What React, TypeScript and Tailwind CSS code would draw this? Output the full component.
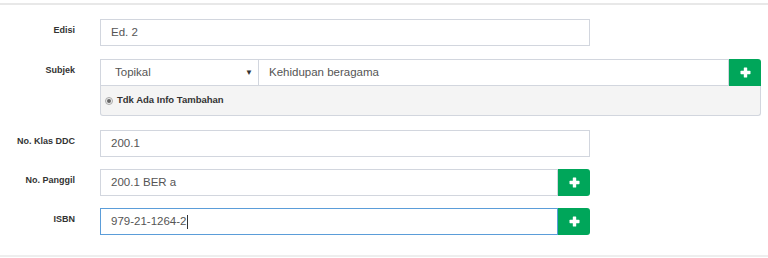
import React from "react";

const font = { fontFamily: '"Liberation Sans", Arial, sans-serif' };

function Plus() {
  return (
    <svg width="11" height="11" viewBox="0 0 11 11">
      <rect x="3.8" y="0.5" width="3.4" height="10" rx="0.6" fill="#fff" />
      <rect x="0.5" y="3.8" width="10" height="3.4" rx="0.6" fill="#fff" />
    </svg>
  );
}

function Label({ children }: { children: React.ReactNode }) {
  return (
    <div className="w-[76px] shrink-0 pt-[6px] pr-[1px] text-right text-[9px] font-bold leading-[11px] text-[#333]">
      {children}
    </div>
  );
}

function GreenBtn({ rounded = "rounded-r-[3px]" }: { rounded?: string }) {
  return (
    <div className={`flex h-[27px] w-[32px] shrink-0 items-center justify-center bg-[#00a65a] ${rounded}`}>
      <Plus />
    </div>
  );
}

export default function App() {
  return (
    <div className="h-[258px] w-[768px] overflow-hidden bg-white" style={font}>
      <div className="h-[3px]" />
      <div className="h-[2px] bg-[#e8e8e8]" />
      <div className="flex flex-col pt-[14px]">
        {/* Edisi */}
        <div className="flex gap-[24px]">
          <Label>Edisi</Label>
          <div className="flex h-[27px] w-[490px] items-center border border-[#d2d6de] px-[10px] text-[11.5px] text-[#555]">
            Ed. 2
          </div>
        </div>
        {/* Subjek */}
        <div className="mt-[13px] flex gap-[24px]">
          <Label>Subjek</Label>
          <div className="flex w-[661px] flex-col">
            <div className="flex h-[27px]">
              <div className="flex w-[159px] items-center justify-between border border-[#d2d6de] pl-[14px] pr-[5px] text-[11.5px] text-[#555]">
                <span>Topikal</span>
                <span className="text-[8px] text-[#333]">▼</span>
              </div>
              <div className="flex flex-1 items-center border border-l-0 border-[#d2d6de] px-[10px] text-[11.5px] text-[#555]">
                Kehidupan beragama
              </div>
              <GreenBtn rounded="rounded-tr-[3px]" />
            </div>
            <div className="flex h-[30px] items-center gap-[4px] rounded-b-[3px] border border-t-0 border-[#d2d6de] bg-[#f4f4f4] pl-[4px] text-[9.5px] font-bold text-[#333]">
              <span className="flex h-[8px] w-[8px] items-center justify-center rounded-full border border-[#aaa] bg-[#eee]">
                <span className="h-[4px] w-[4px] rounded-full bg-[#666]" />
              </span>
              <span>Tdk Ada Info Tambahan</span>
            </div>
          </div>
        </div>
        {/* No. Klas DDC */}
        <div className="mt-[14px] flex gap-[24px]">
          <Label>No. Klas DDC</Label>
          <div className="flex h-[27px] w-[490px] items-center border border-[#d2d6de] px-[10px] text-[11.5px] text-[#555]">
            200.1
          </div>
        </div>
        {/* No. Panggil */}
        <div className="mt-[12px] flex gap-[24px]">
          <Label>No. Panggil</Label>
          <div className="flex w-[490px]">
            <div className="flex h-[27px] flex-1 items-center border border-[#d2d6de] px-[10px] text-[11.5px] text-[#555]">
              200.1 BER a
            </div>
            <GreenBtn />
          </div>
        </div>
        {/* ISBN */}
        <div className="mt-[12px] flex gap-[24px]">
          <Label>ISBN</Label>
          <div className="flex w-[490px]">
            <div className="flex h-[27px] flex-1 items-center border border-[#5b9dd9] px-[10px] text-[11.5px] text-[#555]">
              979-21-1264-2<span className="ml-[1px] h-[14px] w-[1px] bg-[#333]" />
            </div>
            <GreenBtn />
          </div>
        </div>
      </div>
      <div className="mt-[20px] h-[2px] bg-[#eeeeee]" />
    </div>
  );
}
